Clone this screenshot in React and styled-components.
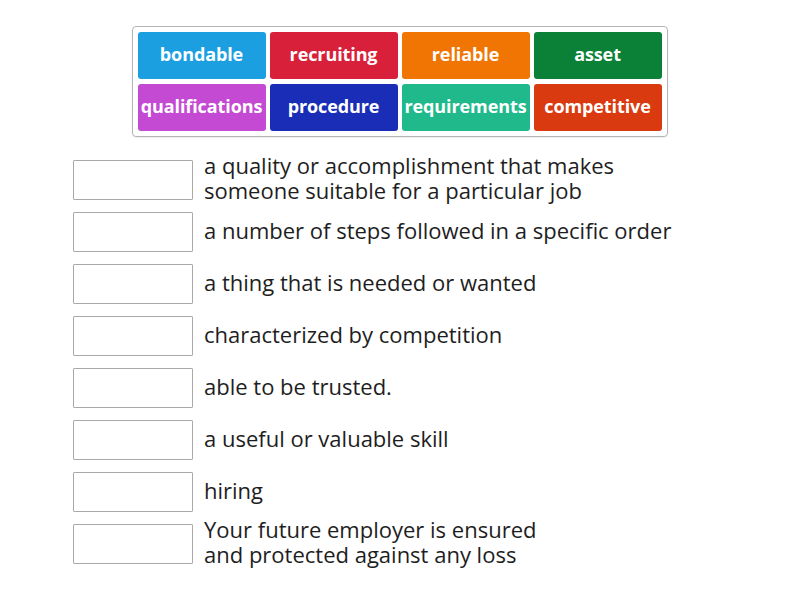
import React from "react";
import styled, { createGlobalStyle } from "styled-components";

const Global = createGlobalStyle`
  html, body { margin: 0; padding: 0; background: #fff; }
  body { font-family: "Open Sans", "DejaVu Sans", sans-serif; }
`;

const Page = styled.div`
  width: 800px;
  height: 600px;
  display: flex;
  flex-direction: column;
  padding-top: 26px;
  box-sizing: border-box;
`;

const Bank = styled.div`
  align-self: center;
  margin-left: -1px;
  display: grid;
  grid-template-columns: repeat(4, 128px);
  grid-auto-rows: 47px;
  gap: 5px 4px;
  padding: 5px;
  border: 1px solid #b5b5b5;
  border-radius: 4px;
  box-shadow: 0 1px 2px rgba(0,0,0,0.08);
`;

const Tile = styled.div`
  background: ${(p) => p.$bg};
  border-radius: 3px;
  color: #fff;
  font-weight: 700;
  font-size: 18px;
  display: flex;
  align-items: center;
  justify-content: center;
  padding-bottom: 4px;
  box-sizing: border-box;
  white-space: nowrap;
  letter-spacing: -0.1px;
`;

const List = styled.div`
  margin-top: 23px;
  padding-left: 73px;
  display: flex;
  flex-direction: column;
  gap: 12px;
`;

const Row = styled.div`
  height: 40px;
  display: flex;
  align-items: center;
  gap: 11px;
`;

const Slot = styled.div`
  width: 120px;
  height: 40px;
  flex: none;
  border: 1px solid #aaa;
  border-radius: 1px;
  box-sizing: border-box;
  background: #fff;
`;

const Def = styled.div`
  font-size: 22px;
  line-height: 25px;
  color: #1e1e1e;
  white-space: nowrap;
  margin-top: -4px;
`;

const tiles = [
  ["bondable", "#1b9fe0"],
  ["recruiting", "#d9203a"],
  ["reliable", "#f17503"],
  ["asset", "#0b8137"],
  ["qualifications", "#c44ad4"],
  ["procedure", "#1a2db6"],
  ["requirements", "#1fb98b"],
  ["competitive", "#da3a0f"],
];

const defs = [
  ["a quality or accomplishment that makes", "someone suitable for a particular job"],
  ["a number of steps followed in a specific order"],
  ["a thing that is needed or wanted"],
  ["characterized by competition"],
  ["able to be trusted."],
  ["a useful or valuable skill"],
  ["hiring"],
  ["Your future employer is ensured", "and protected against any loss"],
];

export default function App() {
  return (
    <>
      <Global />
      <Page>
        <Bank>
          {tiles.map(([t, c]) => (
            <Tile key={t} $bg={c}>{t}</Tile>
          ))}
        </Bank>
        <List>
          {defs.map((lines, i) => (
            <Row key={i}>
              <Slot />
              <Def>
                {lines.map((l, j) => (
                  <div key={j}>{l}</div>
                ))}
              </Def>
            </Row>
          ))}
        </List>
      </Page>
    </>
  );
}
